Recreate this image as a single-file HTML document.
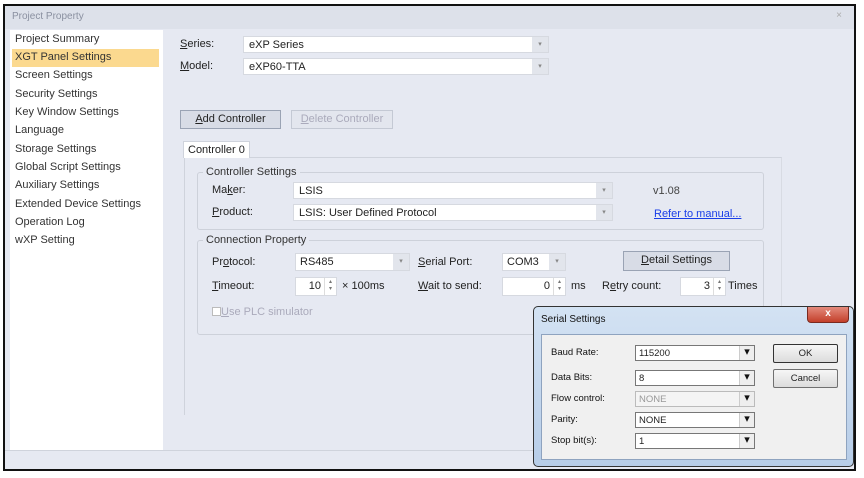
<!DOCTYPE html>
<html><head><meta charset="utf-8"><style>
*{box-sizing:border-box;margin:0;padding:0}
body{width:864px;height:478px;background:#fff;font-family:"Liberation Sans",sans-serif;font-size:11px;color:#222;position:relative;overflow:hidden}
.a{position:absolute}
.win{left:3px;top:4px;width:853px;height:467px;border:2px solid #111;background:#e6e9f2}
.title{left:0;top:0;width:849px;height:23px;background:#dde1ea;color:#8a90a0;font-size:10px;padding:5px 0 0 7px}
.list{left:5px;top:24px;width:153px;height:420px;background:#fff}
.item{position:absolute;left:5px;font-size:11px;color:#333}
.sel{position:absolute;left:2px;top:19px;width:147px;height:18px;background:#fbd98f}
.status{left:0;top:444px;width:849px;height:1px;background:#cfd3dc}
.combo{background:#fff;border:1px solid #d6d9e0}
.combo .arr{position:absolute;right:0;top:0;width:16px;height:100%;background:#e2e5ec;color:#888;font-size:7px;text-align:center;line-height:15px}
.btn{background:#d8dce6;border:1px solid #9aa3b4;text-align:center;line-height:17px}
.grp{border:1px solid #cdd1da;border-radius:3px}
.gl{background:#e6e9f2;padding:0 3px;position:absolute;top:-7px;left:5px;color:#333}
.spin{background:#fff;border:1px solid #d6d9e0;text-align:right;padding-right:15px;line-height:17px}
.spin i{position:absolute;right:0;top:0;width:12px;height:17px;border-left:1px solid #ddd;font-style:normal;font-size:6px;line-height:7px;text-align:center;color:#777;padding-top:1px}
u{text-decoration:underline}
.dlg{left:533px;top:306px;width:321px;height:161px;border:1px solid #333;border-radius:5px;background:linear-gradient(#d3e2f3,#b7cde8)}
.dc{left:7px;top:27px;width:306px;height:126px;background:#f0f0f0;border:1px solid #8ea3bf}
.dl{position:absolute;left:9px;font-size:9.5px;color:#111}
.dcb{position:absolute;left:93px;width:120px;height:16px;background:#fff;border:1px solid #777;font-size:9.5px;padding:2px 3px}
.dcb:after{content:"▾";position:absolute;right:0;top:0;width:14px;height:14px;background:#eee;border-left:1px solid #ccc;text-align:center;font-size:11px;line-height:13px;color:#111}
.dbtn{position:absolute;left:231px;width:65px;height:19px;border:1px solid #707070;background:linear-gradient(#f6f6f6,#dcdcdc);border-radius:2px;text-align:center;font-size:9.5px;line-height:17px}
</style></head><body>
<div class="a win">
 <div class="a title">Project Property<span style="position:absolute;right:12px;top:4px;color:#aaa">×</span></div>
 <div class="a list">
  <div class="sel"></div>
  <div class="item" style="top:3px">Project Summary</div>
  <div class="item" style="top:21px">XGT Panel Settings</div>
  <div class="item" style="top:39px">Screen Settings</div>
  <div class="item" style="top:58px">Security Settings</div>
  <div class="item" style="top:76px">Key Window Settings</div>
  <div class="item" style="top:94px">Language</div>
  <div class="item" style="top:113px">Storage Settings</div>
  <div class="item" style="top:131px">Global Script Settings</div>
  <div class="item" style="top:149px">Auxiliary Settings</div>
  <div class="item" style="top:168px">Extended Device Settings</div>
  <div class="item" style="top:186px">Operation Log</div>
  <div class="item" style="top:204px">wXP Setting</div>
 </div>
 <div class="a status"></div>
</div>
<div class="a" style="left:180px;top:38px"><u>S</u>eries:</div>
<div class="a combo" style="left:243px;top:36px;width:306px;height:17px;padding:2px 5px">eXP Series<div class="arr">▾</div></div>
<div class="a" style="left:180px;top:60px"><u>M</u>odel:</div>
<div class="a combo" style="left:243px;top:58px;width:306px;height:17px;padding:2px 5px">eXP60-TTA<div class="arr">▾</div></div>
<div class="a btn" style="left:180px;top:110px;width:101px;height:19px"><u>A</u>dd Controller</div>
<div class="a btn" style="left:291px;top:110px;width:102px;height:19px;color:#aab;border-color:#c4c9d4;background:#e3e6ee"><u>D</u>elete Controller</div>
<div class="a" style="left:184px;top:157px;width:598px;height:258px;border:1px solid #cfd3dc;border-bottom:none;border-right-color:#d8dbe3"></div>
<div class="a" style="left:183px;top:141px;width:67px;height:17px;background:#fff;border:1px solid #cfd3dc;border-bottom:none;padding:2px 4px">Controller 0</div>
<div class="a grp" style="left:197px;top:172px;width:567px;height:58px"><span class="gl">Controller Settings</span></div>
<div class="a" style="left:212px;top:184px">Ma<u>k</u>er:</div>
<div class="a combo" style="left:293px;top:182px;width:320px;height:17px;padding:2px 5px">LSIS<div class="arr">▾</div></div>
<div class="a" style="left:653px;top:185px;color:#444">v1.08</div>
<div class="a" style="left:212px;top:206px"><u>P</u>roduct:</div>
<div class="a combo" style="left:293px;top:204px;width:320px;height:17px;padding:2px 5px">LSIS: User Defined Protocol<div class="arr">▾</div></div>
<div class="a" style="left:654px;top:208px;color:#1a3ee8;text-decoration:underline">Refer to manual...</div>
<div class="a grp" style="left:197px;top:240px;width:567px;height:95px"><span class="gl">Connection Property</span></div>
<div class="a" style="left:212px;top:256px">Pr<u>o</u>tocol:</div>
<div class="a combo" style="left:295px;top:253px;width:115px;height:18px;padding:2px 4px">RS485<div class="arr">▾</div></div>
<div class="a" style="left:418px;top:256px"><u>S</u>erial Port:</div>
<div class="a combo" style="left:502px;top:253px;width:64px;height:18px;padding:2px 4px">COM3<div class="arr">▾</div></div>
<div class="a btn" style="left:623px;top:251px;width:107px;height:20px"><u>D</u>etail Settings</div>
<div class="a" style="left:212px;top:280px"><u>T</u>imeout:</div>
<div class="a spin" style="left:295px;top:277px;width:42px;height:19px">10<i>▴<br>▾</i></div>
<div class="a" style="left:342px;top:280px">× 100ms</div>
<div class="a" style="left:418px;top:280px"><u>W</u>ait to send:</div>
<div class="a spin" style="left:502px;top:277px;width:64px;height:19px">0<i>▴<br>▾</i></div>
<div class="a" style="left:571px;top:280px">ms</div>
<div class="a" style="left:602px;top:280px">R<u>e</u>try count:</div>
<div class="a spin" style="left:680px;top:277px;width:46px;height:19px">3<i>▴<br>▾</i></div>
<div class="a" style="left:728px;top:280px">Times</div>
<div class="a" style="left:212px;top:306px;color:#aab"><span style="display:inline-block;width:9px;height:9px;border:1px solid #bbb;background:#fff;vertical-align:-1px"></span><u>U</u>se PLC simulator</div>
<div class="a dlg">
 <div class="a" style="left:7px;top:7px;font-size:10px;color:#111">Serial Settings</div>
 <div class="a" style="left:273px;top:0;width:42px;height:16px;background:linear-gradient(#e48a7c,#c3402b);border:1px solid #7a2a20;border-top:none;border-radius:0 0 4px 4px;color:#fff;text-align:center;font-weight:bold;font-size:10px;line-height:14px">x</div>
 <div class="a dc">
  <div class="dl" style="top:12px">Baud Rate:</div><div class="dcb" style="top:10px">115200</div>
  <div class="dl" style="top:37px">Data Bits:</div><div class="dcb" style="top:35px">8</div>
  <div class="dl" style="top:58px">Flow control:</div><div class="dcb" style="top:56px;border-color:#bbb;color:#999;background:#f4f4f4">NONE</div>
  <div class="dl" style="top:79px">Parity:</div><div class="dcb" style="top:77px">NONE</div>
  <div class="dl" style="top:100px">Stop bit(s):</div><div class="dcb" style="top:98px">1</div>
  <div class="dbtn" style="top:9px;border-color:#333">OK</div>
  <div class="dbtn" style="top:34px">Cancel</div>
 </div>
</div>
</body></html>
